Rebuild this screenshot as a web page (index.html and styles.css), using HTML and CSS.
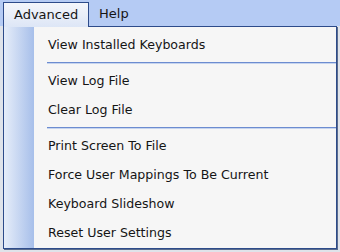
FILE: index.html
```
<!DOCTYPE html>
<html>
<head>
<meta charset="utf-8">
<link rel="stylesheet" href="styles.css">
</head>
<body>
<div class="menubar">
  <div class="top-item active">Advanced</div>
  <div class="top-item">Help</div>
</div>
<div class="dropdown">
  <div class="strip"></div>
  <div class="items">
    <div class="item">View Installed Keyboards</div>
    <div class="sep"></div>
    <div class="item">View Log File</div>
    <div class="item">Clear Log File</div>
    <div class="sep"></div>
    <div class="item">Print Screen To File</div>
    <div class="item">Force User Mappings To Be Current</div>
    <div class="item">Keyboard Slideshow</div>
    <div class="item">Reset User Settings</div>
  </div>
</div>
</body>
</html>
```
FILE: styles.css
```
html, body {
  margin: 0;
  padding: 0;
}
body {
  width: 340px;
  height: 252px;
  overflow: hidden;
  background: #dfe3ea;
  font-family: "DejaVu Sans", sans-serif;
  font-size: 12.6px;
  color: #151515;
}
.menubar {
  height: 26px;
  background: #b5cbf4;
  display: flex;
  align-items: flex-end;
  padding-left: 3px;
}
.top-item {
  height: 24px;
  line-height: 24px;
  padding: 0 11px 0 10px;
  box-sizing: border-box;
  font-size: 13px;
}
.top-item.active {
  width: 86px;
  padding-left: 10px;
  border: 1px solid #2d4b8a;
  border-bottom: none;
  background: linear-gradient(to bottom, #f4f6fb, #dde6f6);
  position: relative;
  z-index: 2;
  margin-bottom: -1px;
  height: 25px;
  line-height: 23px;
}
.dropdown {
  margin-left: 3px;
  width: 334px;
  height: 223px;
  box-sizing: border-box;
  border: 1px solid #2d4b8a;
  background: #f6f6f6;
  display: flex;
  box-shadow: 1px 1px 0 #5a6c8e;
  position: relative;
  z-index: 1;
}
.strip {
  width: 30px;
  flex: none;
  background: linear-gradient(to right, #e6edf9, #a7bfea);
}
.items {
  flex: 1;
  padding-top: 3px;
}
.item {
  height: 29px;
  line-height: 29px;
  padding-left: 14px;
}
.sep {
  height: 7px;
  display: flex;
  align-items: center;
  margin-left: 13px;
}
.sep::before {
  content: "";
  display: block;
  width: 100%;
  height: 1px;
  background: #6c8cd0;
  border-bottom: 1px solid #c6d4ee;
}
```
